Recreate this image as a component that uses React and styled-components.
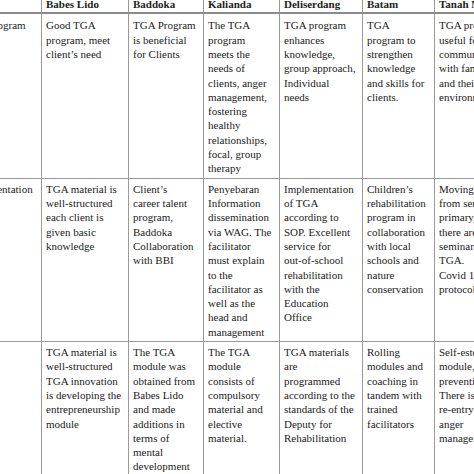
import React from "react";
import styled, { createGlobalStyle } from "styled-components";

const GlobalStyle = createGlobalStyle`
  html, body {
    margin: 0;
    padding: 0;
    background: #ffffff;
    font-family: "Liberation Serif", "DejaVu Serif", serif;
  }
`;

const Viewport = styled.div`
  width: 474px;
  height: 474px;
  overflow: hidden;
  background: #ffffff;
`;

const Grid = styled.div`
  display: grid;
  grid-template-columns: 83px 87px 75px 76px 83px 72px 95px;
  margin-left: -41px;
  margin-top: -6px;
  width: max-content;
  font-family: "Liberation Serif", "DejaVu Serif", serif;
  font-size: 11px;
  line-height: 14.3px;
  color: #222222;
`;

const Cell = styled.div`
  box-sizing: border-box;
  padding: ${(p) => (p.$top ? "4px" : "3px")} 4px ${(p) => (p.$head ? "1.1px" : "2.1px")} 4px;
  border-right: 1px solid #9a9a9a;
  border-bottom: ${(p) => (p.$head ? "2px solid #8a8a8a" : "1px solid #9a9a9a")};
  font-weight: ${(p) => (p.$head ? 700 : 400)};
  white-space: nowrap;
`;

const Line = styled.span`
  display: block;
`;

const headers = ["", "Babes Lido", "Baddoka", "Kalianda", "Deliserdang", "Batam", "Tanah Merah"];

const rows = [
  [
    ["TGA Program"],
    ["Good TGA", "program, meet", "client’s need"],
    ["TGA Program", "is beneficial", "for Clients"],
    ["The TGA", "program", "meets the", "needs of", "clients, anger", "management,", "fostering", "healthy", "relationships,", "focal, group", "therapy"],
    ["TGA program", "enhances", "knowledge,", "group approach,", "Individual", "needs"],
    ["TGA", "program to", "strengthen", "knowledge", "and skills for", "clients."],
    ["TGA program is", "useful for", "community", "with family", "and their", "environment"],
  ],
  [
    ["Implementation"],
    ["TGA material is", "well-structured", "each client is", "given basic", "knowledge"],
    ["Client’s", "career talent", "program,", "Baddoka", "Collaboration", "with BBI"],
    ["Penyebaran", "Information", "dissemination", "via WAG. The", "facilitator", "must explain", "to the", "facilitator as", "well as the", "head and", "management"],
    ["Implementation", "of TGA", "according to", "SOP. Excellent", "service for", "out-of-school", "rehabilitation", "with the", "Education", "Office"],
    ["Children’s", "rehabilitation", "program in", "collaboration", "with local", "schools and", "nature", "conservation"],
    ["Moving", "from seminar", "primary,", "there are", "seminars", "TGA.", "Covid 19", "protocol"],
  ],
  [
    ["Module"],
    ["TGA material is", "well-structured", "TGA innovation", "is developing the", "entrepreneurship", "module"],
    ["The TGA", "module was", "obtained from", "Babes Lido", "and made", "additions in", "terms of", "mental", "development", "aspects"],
    ["The TGA", "module", "consists of", "compulsory", "material and", "elective", "material."],
    ["TGA materials", "are", "programmed", "according to the", "standards of the", "Deputy for", "Rehabilitation"],
    ["Rolling", "modules and", "coaching in", "tandem with", "trained", "facilitators"],
    ["Self-esteem", "module,", "prevention.", "There is", "re-entry", "anger", "management"],
  ],
];

export default function App() {
  return (
    <>
      <GlobalStyle />
      <Viewport>
        <Grid>
          {headers.map((h, i) => (
            <Cell key={"h" + i} $head>
              <Line>{h || "\u00a0"}</Line>
            </Cell>
          ))}
          {rows.map((row, r) =>
            row.map((lines, c) => (
              <Cell key={r + "-" + c} $top={r === 0}>
                {lines.map((t, k) => (
                  <Line key={k}>{t}</Line>
                ))}
              </Cell>
            ))
          )}
        </Grid>
      </Viewport>
    </>
  );
}
